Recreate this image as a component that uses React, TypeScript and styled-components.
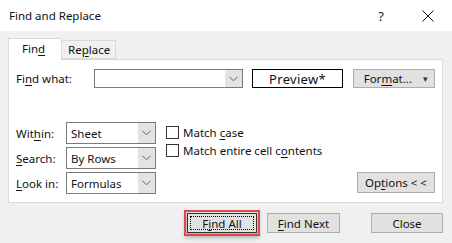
import React, { FC } from 'react';
import styled, { createGlobalStyle } from 'styled-components';

const GlobalStyle = createGlobalStyle`
  html, body {
    margin: 0;
    padding: 0;
    background: #f0f0f0;
  }
  body {
    font-family: 'Noto Sans', 'Open Sans', sans-serif;
    font-size: 11.5px;
    color: #111;
  }
  u {
    text-underline-offset: 2px;
  }
`;

const Chevron: FC = () => (
  <svg width="9" height="6" viewBox="0 0 9 6">
    <path d="M0.5 0.8 L4.5 4.8 L8.5 0.8" fill="none" stroke="#606060" strokeWidth="1" />
  </svg>
);

const Select: FC<{ value: string; width: number }> = ({ value, width }) => (
  <SelectBox style={{ width }}>
    <SelectValue>{value}</SelectValue>
    <DropButton>
      <Chevron />
    </DropButton>
  </SelectBox>
);

const App: FC = () => {
  return (
    <Window>
      <GlobalStyle />
      <TitleBar>
        <Title>Find and Replace</Title>
        <TitleButtons>
          <Help>?</Help>
          <CloseIcon width="12" height="12" viewBox="0 0 12 12">
            <path d="M0.5 0.5 L11.5 11.5 M11.5 0.5 L0.5 11.5" stroke="#222" strokeWidth="1" />
          </CloseIcon>
        </TitleButtons>
      </TitleBar>

      <Body>
        <Tabs>
          <Tab active>
            Fin<u>d</u>
          </Tab>
          <Tab>
            Re<u>p</u>lace
          </Tab>
        </Tabs>

        <Panel>
          <FindRow>
            <Label style={{ width: 78 }}>
              Fi<u>n</u>d what:
            </Label>
            <Select value="" width={149} />
            <Preview>Preview*</Preview>
            <FormatButton>
              <span>
                For<u>m</u>at...
              </span>
              <Caret>▾</Caret>
            </FormatButton>
          </FindRow>

          <Lower>
            <Options>
              <Label>
                Wit<u>h</u>in:
              </Label>
              <Select value="Sheet" width={90} />
              <Label>
                <u>S</u>earch:
              </Label>
              <Select value="By Rows" width={90} />
              <Label>
                <u>L</u>ook in:
              </Label>
              <Select value="Formulas" width={90} />
            </Options>

            <Checks>
              <CheckRow>
                <CheckBox />
                <span>
                  Match <u>c</u>ase
                </span>
              </CheckRow>
              <CheckRow>
                <CheckBox />
                <span>
                  Match entire cell c<u>o</u>ntents
                </span>
              </CheckRow>
            </Checks>

            <OptionsButton>
              Op<u>t</u>ions &lt; &lt;
            </OptionsButton>
          </Lower>
        </Panel>

        <Footer>
          <Button width={70} highlighted>
            <FocusRing>
              F<u>i</u>nd All
            </FocusRing>
          </Button>
          <Button width={73}>
            <u>F</u>ind Next
          </Button>
          <Button width={72} style={{ marginLeft: 21 }}>
            Close
          </Button>
        </Footer>
      </Body>
    </Window>
  );
};

export default App;

const Window = styled.div`
  width: 452px;
  height: 243px;
  background: #f0f0f0;
  overflow: hidden;
`;

const TitleBar = styled.div`
  height: 31px;
  background: #fff;
  display: flex;
  align-items: center;
  justify-content: space-between;
  padding: 0 18px 0 9px;
  box-sizing: border-box;
`;

const Title = styled.div`
  font-size: 11.5px;
  padding-bottom: 1px;
`;

const TitleButtons = styled.div`
  display: flex;
  align-items: center;
  gap: 38px;
`;

const Help = styled.span`
  font-size: 13px;
  color: #222;
`;

const CloseIcon = styled.svg`
  display: block;
`;

const Body = styled.div`
  padding: 7px 9px 0 8px;
`;

const Tabs = styled.div`
  display: flex;
  align-items: flex-end;
  height: 21px;
  position: relative;
  z-index: 1;
`;

const Tab = styled.div<{ active?: boolean }>`
  box-sizing: border-box;
  width: 54px;
  height: ${(p) => (p.active ? '22px' : '19px')};
  margin-bottom: ${(p) => (p.active ? '-1px' : '0')};
  background: ${(p) => (p.active ? '#fff' : '#f0f0f0')};
  border: 1px solid #d9d9d9;
  border-bottom: ${(p) => (p.active ? 'none' : '1px solid #d9d9d9')};
  ${(p) => (p.active ? '' : 'border-left: none;')}
  display: flex;
  align-items: center;
  padding-left: ${(p) => (p.active ? '13px' : '6px')};
  padding-bottom: ${(p) => (p.active ? '2px' : '0')};
`;

const Panel = styled.div`
  box-sizing: border-box;
  width: 435px;
  height: 144px;
  background: #fff;
  border: 1px solid #d9d9d9;
  padding: 9px 7px 0 7px;
`;

const FindRow = styled.div`
  display: flex;
  align-items: center;
  height: 19px;
`;

const Label = styled.span`
  white-space: nowrap;
`;

const SelectBox = styled.div`
  box-sizing: border-box;
  height: 100%;
  border: 1px solid #7a7a7a;
  background: #fff;
  display: flex;
  align-items: stretch;
`;

const SelectValue = styled.div`
  flex: 1;
  display: flex;
  align-items: center;
  padding-left: 4px;
  white-space: nowrap;
`;

const DropButton = styled.div`
  width: 17px;
  background: #e3e3e3;
  display: flex;
  align-items: center;
  justify-content: center;
`;

const Preview = styled.div`
  box-sizing: border-box;
  width: 91px;
  height: 19px;
  margin-left: 9px;
  border: 1px solid #000;
  display: flex;
  align-items: center;
  justify-content: center;
  font-size: 13px;
  letter-spacing: 0.3px;
`;

const ButtonBase = styled.div`
  box-sizing: border-box;
  background: #e1e1e1;
  border: 1px solid #adadad;
  display: flex;
  align-items: center;
  justify-content: center;
  white-space: nowrap;
`;

const FormatButton = styled(ButtonBase)`
  width: 82px;
  height: 19px;
  margin-left: 10px;
  justify-content: flex-end;
  padding-right: 6px;
  gap: 11px;
`;

const Caret = styled.span`
  font-size: 9px;
  color: #333;
`;

const Lower = styled.div`
  display: flex;
  margin-top: 34px;
  height: 72px;
`;

const Options = styled.div`
  display: grid;
  grid-template-columns: 50px 90px;
  grid-auto-rows: 22px;
  row-gap: 3px;
  align-items: center;
  & > ${SelectBox} {
    height: 22px;
  }
`;

const Checks = styled.div`
  display: flex;
  flex-direction: column;
  gap: 5px;
  margin-left: 10px;
  padding-top: 4px;
`;

const CheckRow = styled.div`
  display: flex;
  align-items: center;
  gap: 4px;
  height: 13px;
`;

const CheckBox = styled.span`
  box-sizing: border-box;
  width: 13px;
  height: 13px;
  border: 1px solid #333;
  background: #fff;
`;

const OptionsButton = styled(ButtonBase)`
  width: 78px;
  height: 21px;
  margin-left: auto;
  align-self: flex-end;
  margin-bottom: 1px;
`;

const Footer = styled.div`
  display: flex;
  justify-content: flex-end;
  gap: 10px;
  width: 435px;
  margin-top: 10px;
`;

const Button = styled(ButtonBase)<{ width: number; highlighted?: boolean }>`
  width: ${(p) => p.width}px;
  height: 20px;
  ${(p) =>
    p.highlighted
      ? `
    border-color: #333;
    outline: 2px solid #e0474c;
    outline-offset: 1px;
    box-shadow: 0 3px 4px 2px rgba(0,0,0,0.25);
  `
      : ''}
`;

const FocusRing = styled.span`
  display: flex;
  align-items: center;
  justify-content: center;
  box-sizing: border-box;
  width: calc(100% - 4px);
  height: calc(100% - 4px);
  border: 1px dotted #000;
`;
